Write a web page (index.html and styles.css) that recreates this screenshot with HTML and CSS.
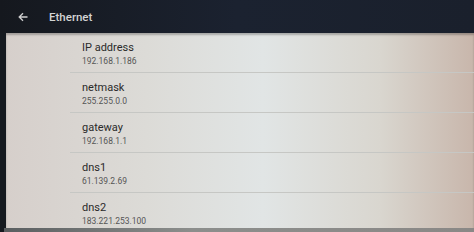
FILE: index.html
```html
<!DOCTYPE html>
<html lang="en">
  <head>
    <meta charset="UTF-8" />
    <meta name="viewport" content="width=device-width, initial-scale=1.0" />
    <title>Ethernet</title>
    <link rel="stylesheet" href="styles.css">
  </head>
  <body>
    <div class="toolbar">
      <svg class="back" width="10" height="10" viewBox="0 0 10 10">
        <path d="M9.5 5H1.5M5 1.2L1.2 5 5 8.8" fill="none" stroke="#d0d0d0" stroke-width="1.3" />
      </svg>
      <div class="title">Ethernet</div>
    </div>
    <div class="panel">
      <div class="row">
        <div class="label">IP address</div>
        <div class="value">192.168.1.186</div>
      </div>
      <div class="row">
        <div class="label">netmask</div>
        <div class="value">255.255.0.0</div>
      </div>
      <div class="row">
        <div class="label">gateway</div>
        <div class="value">192.168.1.1</div>
      </div>
      <div class="row">
        <div class="label">dns1</div>
        <div class="value">61.139.2.69</div>
      </div>
      <div class="row last">
        <div class="label">dns2</div>
        <div class="value">183.221.253.100</div>
      </div>
    </div>
    <div class="bottom"></div>
  </body>
</html>
```
FILE: styles.css
```css
body {
  margin: 0;
  height: 232px;
  overflow: hidden;
  background-color: #15191f;
  font-family: Roboto, "Liberation Sans", sans-serif;
}
.toolbar {
  height: 33px;
  display: flex;
  align-items: center;
  background: linear-gradient(90deg, #15181e, #1b2230 50%, #1a202c);
}
.back {
  margin-left: 18px;
  margin-right: 21px;
}
.title {
  color: #d4d4d4;
  font-size: 11.5px;
  font-weight: 500;
}
.panel {
  margin-left: 6px;
  height: 195px;
  background: linear-gradient(90deg, #d6cfcb, #dcdbd7 30%, #e1e5e5 55%, #d9d6cf 80%, #c8b6ab);
  box-shadow: inset 0 2px 2px rgba(0, 0, 0, 0.25);
}
.row {
  margin-left: 64px;
  height: 40px;
  padding-left: 12px;
  padding-top: 8px;
  box-sizing: border-box;
  border-bottom: 1px solid #c6c7c4;
}
.row.last {
  border-bottom: none;
  height: 35px;
}
.label {
  font-size: 11px;
  line-height: 14px;
  color: #2a2a2a;
}
.value {
  font-size: 8.5px;
  line-height: 12px;
  color: #555;
}
.bottom {
  margin-left: 4px;
  height: 4px;
  background: linear-gradient(90deg, #5a5e60, #8c8e8c 40%, #8a8886);
}
```
